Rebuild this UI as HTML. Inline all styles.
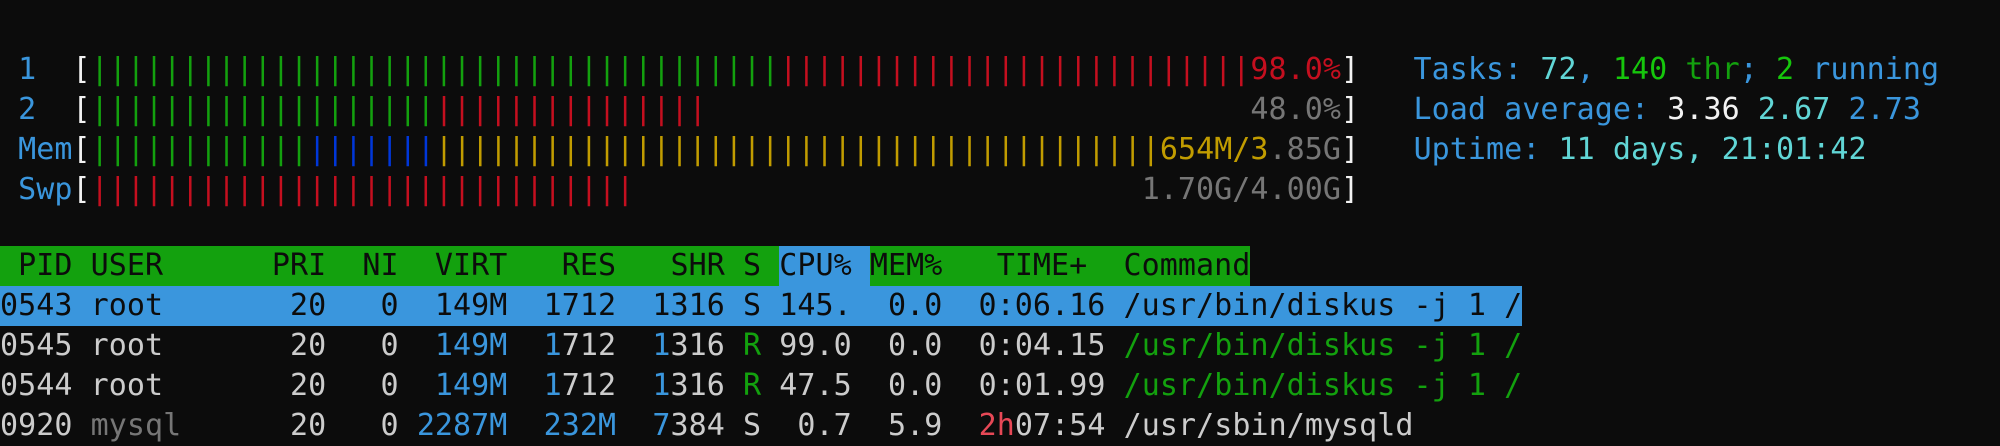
<!DOCTYPE html>
<html><head><meta charset="utf-8"><style>
html,body{margin:0;padding:0;background:#0c0c0c;width:2000px;height:423px;overflow:hidden}
.t{position:absolute;left:0;top:6px;font-family:"DejaVu Sans Mono","Liberation Mono",monospace;font-size:30px;letter-spacing:0.06px;line-height:40px;color:#cccccc;white-space:pre}
.l{height:40px;display:block}
.m{position:relative;top:4px}
.bg{display:inline-block;height:40px;vertical-align:top}
.b{color:#3a96dd}.g{color:#13a10e}.G{color:#16c60c}.r{color:#c50f1f}.R{color:#e74856}.y{color:#c19c00}.u{color:#0037da}.c{color:#61d6d6}.w{color:#f2f2f2}.k{color:#767676}
.hg{background:#13a10e;color:#0c0c0c}.hc{background:#3a96dd;color:#0c0c0c}
</style></head><body><div class="t"><div class="l"> </div><div class="l m"> <span class="b">1</span>  <span class="w">[</span><span class="g">||||||||||||||||||||||||||||||||||||||</span><span class="r">||||||||||||||||||||||||||</span><span class="r">98.0%</span><span class="w">]</span>   <span class="b">Tasks: </span><span class="c">72</span><span class="b">, </span><span class="G">140</span><span class="g"> thr</span><span class="b">; </span><span class="G">2</span><span class="b"> running</span></div><div class="l m"> <span class="b">2</span>  <span class="w">[</span><span class="g">|||||||||||||||||||</span><span class="r">|||||||||||||||</span>                              <span class="k">48.0%</span><span class="w">]</span>   <span class="b">Load average: </span><span class="w">3.36</span> <span class="c">2.67</span> <span class="b">2.73</span></div><div class="l m"> <span class="b">Mem</span><span class="w">[</span><span class="g">||||||||||||</span><span class="u">|||||||</span><span class="y">||||||||||||||||||||||||||||||||||||||||</span><span class="y">654M/3</span><span class="k">.85G</span><span class="w">]</span>   <span class="b">Uptime: </span><span class="c">11 days, 21:01:42</span></div><div class="l m"> <span class="b">Swp</span><span class="w">[</span><span class="r">||||||||||||||||||||||||||||||</span>                            <span class="k">1.70G/4.00G</span><span class="w">]</span></div><div class="l"> </div><div class="l"><span class="bg hg"> PID USER      PRI  NI  VIRT   RES   SHR S </span><span class="bg hc">CPU% </span><span class="bg hg">MEM%   TIME+  Command</span></div><div class="l"><span class="bg hc">0543 root       20   0  149M  1712  1316 S 145.  0.0  0:06.16 /usr/bin/diskus -j 1 /</span></div><div class="l">0545 root       20   0  <span class="b">149M</span>  <span class="b">1</span>712  <span class="b">1</span>316 <span class="g">R</span> 99.0  0.0  0:04.15 <span class="g">/usr/bin/diskus -j 1 /</span></div><div class="l">0544 root       20   0  <span class="b">149M</span>  <span class="b">1</span>712  <span class="b">1</span>316 <span class="g">R</span> 47.5  0.0  0:01.99 <span class="g">/usr/bin/diskus -j 1 /</span></div><div class="l">0920 <span class="k">mysql</span>      20   0 <span class="b">2287M</span>  <span class="b">232M</span>  <span class="b">7</span>384 S  0.7  5.9  <span class="R">2h</span>07:54 /usr/sbin/mysqld</div></div></body></html>
